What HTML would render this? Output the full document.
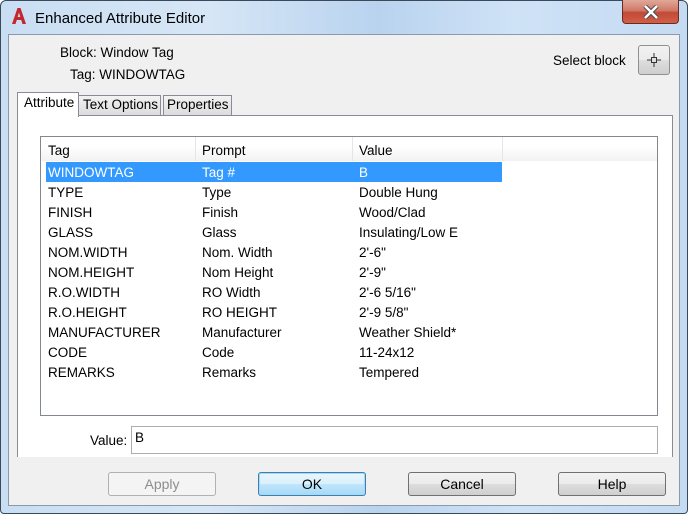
<!DOCTYPE html>
<html><head><meta charset="utf-8"><style>
*{box-sizing:border-box;margin:0;padding:0}
body{width:688px;height:514px;overflow:hidden;background:#fff;font-family:"Liberation Sans",sans-serif;font-size:13.5px;color:#000;position:relative}
.abs{position:absolute}
#frame{left:0;top:0;width:688px;height:514px;border:1px solid #3a4a5a;border-radius:6px 6px 4px 4px;background:linear-gradient(90deg,#c9def3 0%,#d6e6f6 30%,#b9d3ef 55%,#cfe2f6 75%,#c4dbf2 100%)}
#client{left:8px;top:34px;width:672px;height:472px;background:#f0f0f0;border:1px solid #8a9aab}
.t{position:absolute;white-space:nowrap}
.btn{position:absolute;height:24px;border:1px solid #707070;border-radius:3px;background:linear-gradient(#f2f2f2 0%,#ebebeb 50%,#dddddd 51%,#cfcfcf 100%);text-align:center;line-height:23px;font-size:14px}
.row{position:absolute;left:46px;height:20px;width:456px}
.row span{position:absolute;top:3px;white-space:nowrap}
</style></head><body>
<div id="frame" class="abs"></div>
<svg class="abs" style="left:10px;top:7px" width="18" height="18" viewBox="0 0 18 18"><path d="M2 17 L7.5 1 L10.5 1 L16 17 L12.5 17 L11.2 13 L6.8 13 L5.5 17 Z M7.7 10 L10.3 10 L9 5.5 Z" fill="#c4262e"/></svg>
<div class="t" style="left:35px;top:10px;font-size:15px">Enhanced Attribute Editor</div>
<div class="abs" style="left:622px;top:0;width:57px;height:24px;border:1px solid #6b2a22;border-top:none;border-radius:0 0 4px 4px;background:linear-gradient(#e0a898 0%,#d07a6a 45%,#c24a36 55%,#d06048 100%)"></div>
<svg class="abs" style="left:642px;top:5px" width="18" height="14" viewBox="0 0 18 14"><path d="M3 1 L15 13 M15 1 L3 13" stroke="#4a4a4a" stroke-width="4.5"/><path d="M3 1 L15 13 M15 1 L3 13" stroke="#fff" stroke-width="2.5"/></svg>
<div id="client" class="abs"></div>
<div class="t" style="left:60px;top:45px">Block: Window Tag</div>
<div class="t" style="left:70px;top:67px">Tag: WINDOWTAG</div>
<div class="t" style="left:553px;top:53px">Select block</div>
<div class="btn" style="left:638px;top:45px;width:32px;height:30px;border-color:#909090"></div>
<svg class="abs" style="left:646px;top:52px" width="16" height="16" viewBox="0 0 16 16"><path d="M8 1V15M1 8H15" stroke="#333" stroke-width="1"/><rect x="5.5" y="5.5" width="5" height="5" fill="#ddd" stroke="#333"/></svg>
<div class="abs" style="left:17px;top:115px;width:656px;height:342px;background:#fff;border-left:1px solid #898c95;border-top:1px solid #898c95;border-right:1px solid #898c95"></div>
<div class="abs" style="left:78px;top:95px;width:83px;height:21px;border:1px solid #898c95;background:linear-gradient(#f3f3f3,#dcdcdc)"></div>
<div class="t" style="left:83px;top:97px">Text Options</div>
<div class="abs" style="left:163px;top:95px;width:69px;height:21px;border:1px solid #898c95;background:linear-gradient(#f3f3f3,#dcdcdc)"></div>
<div class="t" style="left:167px;top:97px">Properties</div>
<div class="abs" style="left:17px;top:92px;width:62px;height:25px;border:1px solid #898c95;border-bottom:none;background:#fff"></div>
<div class="t" style="left:24px;top:95px">Attribute</div>
<div class="abs" style="left:40px;top:136px;width:618px;height:280px;border:1px solid #828790;background:#fff"></div>
<div class="abs" style="left:41px;top:146px;width:616px;height:15px;background:linear-gradient(#fff,#f2f2f2)"></div>
<div class="abs" style="left:195px;top:137px;width:1px;height:24px;background:#e5e5e5"></div>
<div class="abs" style="left:352px;top:137px;width:1px;height:24px;background:#e5e5e5"></div>
<div class="abs" style="left:502px;top:137px;width:1px;height:24px;background:#e5e5e5"></div>
<div class="t" style="left:48px;top:143px">Tag</div>
<div class="t" style="left:202px;top:143px">Prompt</div>
<div class="t" style="left:359px;top:143px">Value</div>
<div class="row" style="top:162px;background:#3399ff;color:#fff"><span style="left:2px">WINDOWTAG</span><span style="left:156px">Tag #</span><span style="left:313px">B</span></div>
<div class="row" style="top:182px"><span style="left:2px">TYPE</span><span style="left:156px">Type</span><span style="left:313px">Double Hung</span></div>
<div class="row" style="top:202px"><span style="left:2px">FINISH</span><span style="left:156px">Finish</span><span style="left:313px">Wood/Clad</span></div>
<div class="row" style="top:222px"><span style="left:2px">GLASS</span><span style="left:156px">Glass</span><span style="left:313px">Insulating/Low E</span></div>
<div class="row" style="top:242px"><span style="left:2px">NOM.WIDTH</span><span style="left:156px">Nom. Width</span><span style="left:313px">2'-6"</span></div>
<div class="row" style="top:262px"><span style="left:2px">NOM.HEIGHT</span><span style="left:156px">Nom Height</span><span style="left:313px">2'-9"</span></div>
<div class="row" style="top:282px"><span style="left:2px">R.O.WIDTH</span><span style="left:156px">RO Width</span><span style="left:313px">2'-6 5/16"</span></div>
<div class="row" style="top:302px"><span style="left:2px">R.O.HEIGHT</span><span style="left:156px">RO HEIGHT</span><span style="left:313px">2'-9 5/8"</span></div>
<div class="row" style="top:322px"><span style="left:2px">MANUFACTURER</span><span style="left:156px">Manufacturer</span><span style="left:313px">Weather Shield*</span></div>
<div class="row" style="top:342px"><span style="left:2px">CODE</span><span style="left:156px">Code</span><span style="left:313px">11-24x12</span></div>
<div class="row" style="top:362px"><span style="left:2px">REMARKS</span><span style="left:156px">Remarks</span><span style="left:313px">Tempered</span></div>
<div class="t" style="left:90px;top:433px">Value:</div>
<div class="abs" style="left:131px;top:426px;width:527px;height:28px;border:1px solid #abadb3;background:#fff"></div>
<div class="t" style="left:135px;top:430px">B</div>
<div class="btn" style="left:108px;top:472px;width:108px;border-color:#adb2b5;background:#f4f4f4;color:#8d8d8d">Apply</div>
<div class="btn" style="left:258px;top:472px;width:108px;border-color:#3c7fb1;box-shadow:inset 0 0 0 1px #a8d8f5;background:linear-gradient(#eaf6fd 0%,#d9f0fc 50%,#bee6fd 51%,#a7d9f5 100%)">OK</div>
<div class="btn" style="left:408px;top:472px;width:108px">Cancel</div>
<div class="btn" style="left:558px;top:472px;width:108px">Help</div>
</body></html>
